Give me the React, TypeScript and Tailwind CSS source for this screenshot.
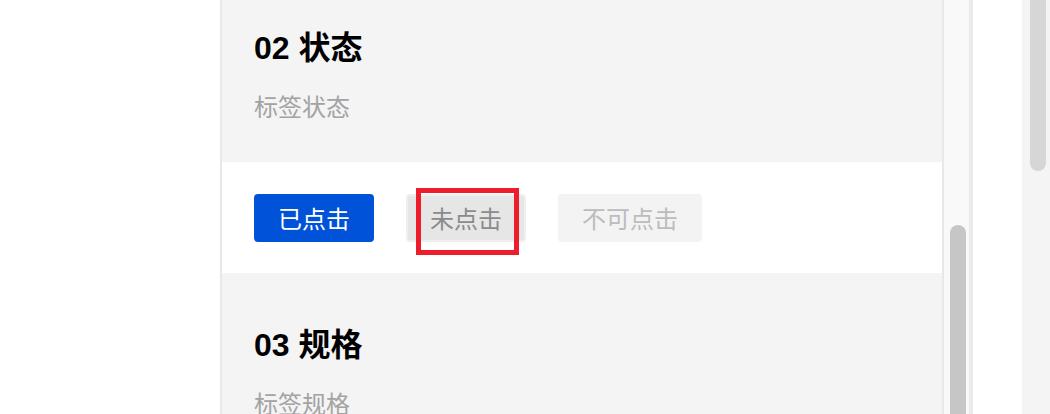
import React from "react";

const font = { fontFamily: '"Noto Sans CJK SC", "Noto Sans", sans-serif' };
const titleFont = { fontFamily: '"Liberation Sans", "Noto Sans CJK SC", sans-serif' };

function SectionHeader({ title, sub, first }: { title: string; sub: string; first?: boolean }) {
  return (
    <div className={`${first ? "pt-[24px]" : "pt-[48px]"} pb-[38px] pl-[32px]`}>
      <div className="h-[48px] text-[32px] leading-[48px] font-bold text-[#000000]" style={titleFont}>
        {title}
      </div>
      <div className="mt-[16px] text-[24px] leading-[36px] text-[#a3a3a3]">{sub}</div>
    </div>
  );
}

export default function App() {
  return (
    <div className="flex h-[414px] w-[1050px] overflow-hidden bg-white" style={font}>
      <div className="w-[220px] shrink-0 bg-white" />
      <div className="w-[2px] shrink-0 bg-[#e8e8e8]" />
      <div className="w-[720px] shrink-0 bg-[#f4f4f4]">
        <SectionHeader first title="02 状态" sub="标签状态" />
        <div className="flex items-center gap-[32px] bg-white pl-[32px] pt-[32px] pb-[31px]">
          <div className="flex h-[48px] w-[120px] items-center justify-center rounded-[4px] bg-[#0052d9] text-[24px] text-white">
            已点击
          </div>
          <div className="relative flex h-[48px] w-[120px] items-center justify-center rounded-[4px] border-2 border-[#efefef] bg-[#e6e6e6] text-[24px] text-[#8b8b8b]">
            未点击
            <div className="absolute left-[8px] top-[-8px] h-[67px] w-[103px] border-[5px] border-[#ee1d2b]" />
          </div>
          <div className="flex h-[48px] w-[144px] items-center justify-center rounded-[4px] bg-[#f3f3f3] text-[24px] text-[#bcbcbc]">
            不可点击
          </div>
        </div>
        <SectionHeader title="03 规格" sub="标签规格" />
      </div>
      <div className="w-[2px] shrink-0 bg-[#e8e8e8]" />
      <div className="relative w-[25px] shrink-0 bg-[#f9f9f9]">
        <div className="absolute left-[6px] top-[225px] h-[220px] w-[16px] rounded-full bg-[#c6c6c6]" />
      </div>
      <div className="w-[4px] shrink-0 bg-[#ebebeb]" />
      <div className="w-[49px] shrink-0 bg-white" />
      <div className="relative w-[28px] shrink-0 bg-[#f4f4f4]">
        <div className="absolute left-[8px] top-[-20px] h-[191px] w-[16px] rounded-full bg-[#d6d6d6]" />
      </div>
    </div>
  );
}
